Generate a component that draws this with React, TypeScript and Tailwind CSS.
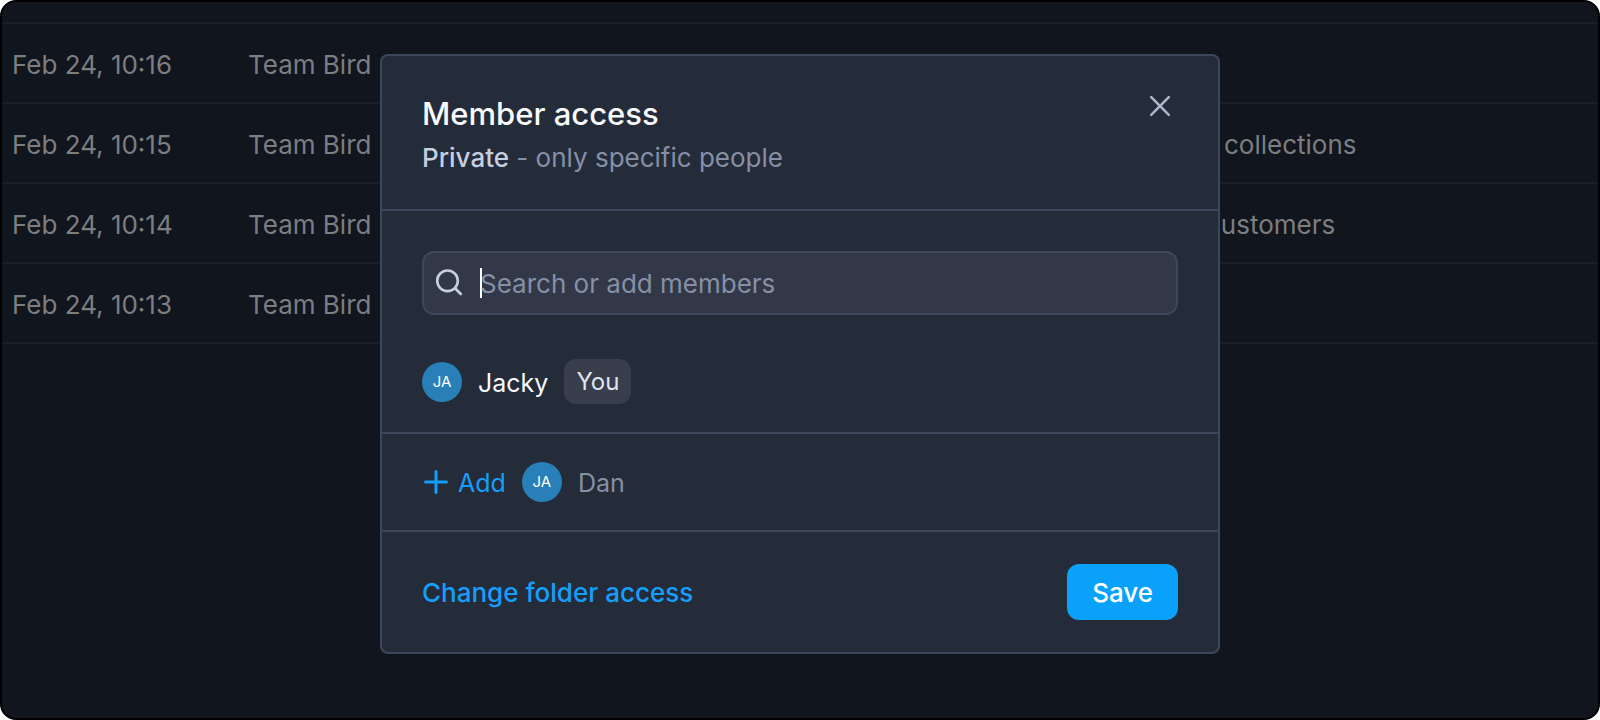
import { useState } from 'react';

interface ActivityRow {
  date: string;
  team: string;
  detail: string;
  detailClass?: string;
}

const rows: ActivityRow[] = [
  { date: 'Feb 24, 10:16', team: 'Team Bird', detail: '' },
  { date: 'Feb 24, 10:15', team: 'Team Bird', detail: 'collections', detailClass: 'pt-1 pl-6' },
  { date: 'Feb 24, 10:14', team: 'Team Bird', detail: 'customers', detailClass: 'pt-1 pl-1.5' },
  { date: 'Feb 24, 10:13', team: 'Team Bird', detail: '' },
];

function CloseIcon() {
  return (
    <svg width="36" height="36" viewBox="0 0 36 36" fill="none" stroke="currentColor" strokeWidth="2.6" strokeLinecap="round" aria-hidden="true">
      <path d="M9.2 9.2L26.8 26.8M26.8 9.2L9.2 26.8" />
    </svg>
  );
}

function SearchIcon() {
  return (
    <svg width="28" height="28" viewBox="0 0 28 28" fill="none" stroke="currentColor" strokeWidth="2.6" strokeLinecap="round" aria-hidden="true">
      <circle cx="11.5" cy="11.8" r="10.3" />
      <path d="M19 19.3L24.8 25" />
    </svg>
  );
}

function PlusIcon() {
  return (
    <svg width="28" height="28" viewBox="0 0 28 28" fill="none" stroke="currentColor" strokeWidth="3" strokeLinecap="round" aria-hidden="true">
      <path d="M14 3.5V24.5M3.5 14H24.5" />
    </svg>
  );
}

function Avatar({ initials }: { initials: string }) {
  return (
    <span className="flex h-10 w-10 shrink-0 items-center justify-center rounded-full bg-[#2980b9] text-[15px] text-white">
      {initials}
    </span>
  );
}

function ActivityTable() {
  return (
    <table className="mt-5 w-full table-fixed border-collapse text-[#7c7e80]">
      <tbody>
        {rows.map((row) => (
          <tr key={row.date} className="h-20 border-y-2 border-[#1a1f27]">
            <td className="w-[236px] pt-1 pl-2.5">{row.date}</td>
            <td className="w-[962px] pt-1 pl-2.5">{row.team}</td>
            <td className={row.detailClass}>{row.detail}</td>
          </tr>
        ))}
      </tbody>
    </table>
  );
}

function MemberAccessDialog() {
  const [query, setQuery] = useState('');

  return (
    <div
      role="dialog"
      aria-labelledby="member-access-title"
      className="w-full max-w-[840px] rounded-lg border-2 border-[#3d475b] bg-[#242b39]"
    >
      <header className="flex items-start justify-between border-b-2 border-[#3d475b] px-10 pt-8 pb-[33px]">
        <div>
          <h2 id="member-access-title" className="text-[31px] leading-[52px] font-medium text-[#f8fafc]">
            Member access
          </h2>
          <p className="leading-9 text-[#8590a6]">
            <span className="font-medium text-[#c5cfe0]">Private</span> - only specific people
          </p>
        </div>
        <button type="button" aria-label="Close" className="text-[#a9b4c8]">
          <CloseIcon />
        </button>
      </header>

      <section className="px-10 pt-10 pb-7">
        <label className="flex h-16 items-center rounded-xl border-2 border-[#3d475b] bg-[#323847] px-3">
          <span className="text-[#c5cfe0]">
            <SearchIcon />
          </span>
          <span className="-mr-0.5 ml-4 h-[30px] w-0.5 bg-white" />
          <input
            type="text"
            aria-label="Search or add members"
            placeholder="Search or add members"
            value={query}
            onChange={(e) => setQuery(e.target.value)}
            className="min-w-0 flex-1 bg-transparent pt-0.5 text-[#f8fafc] outline-none placeholder:text-[#8590a6]"
          />
        </label>
        <div className="mt-11 flex h-[45px] items-center gap-4">
          <Avatar initials="JA" />
          <span className="pt-0.5 text-[25px] text-[#f8fafc]">Jacky</span>
          <span className="flex h-full items-center rounded-xl bg-[#383e4c] px-3 text-2xl text-[#dfe4ee]">You</span>
        </div>
      </section>

      <section className="flex h-[98px] items-center gap-4 border-t-2 border-[#3d475b] px-10">
        <button type="button" className="flex items-center gap-2 text-[25px] text-[#159ffa]">
          <PlusIcon />
          <span className="pt-0.5">Add</span>
        </button>
        <Avatar initials="JA" />
        <span className="pt-0.5 text-[25px] text-[#8590a6]">Dan</span>
      </section>

      <footer className="flex items-center justify-between border-t-2 border-[#3d475b] px-10 py-8">
        <a href="#folder-access" className="pt-0.5 font-medium text-[#159ffa]">
          Change folder access
        </a>
        <button type="button" className="h-14 rounded-xl bg-[#0aa1fb] px-[25px] pt-0.5 font-medium text-white">
          Save
        </button>
      </footer>
    </div>
  );
}

export default function App() {
  return (
    <main className="relative min-h-screen overflow-hidden rounded-2xl border-2 border-black bg-[#11151d] font-['Inter','Liberation_Sans',sans-serif] text-[26px] leading-8">
      <ActivityTable />
      <div className="absolute inset-0 flex items-start justify-center pt-[52px]">
        <MemberAccessDialog />
      </div>
    </main>
  );
}
